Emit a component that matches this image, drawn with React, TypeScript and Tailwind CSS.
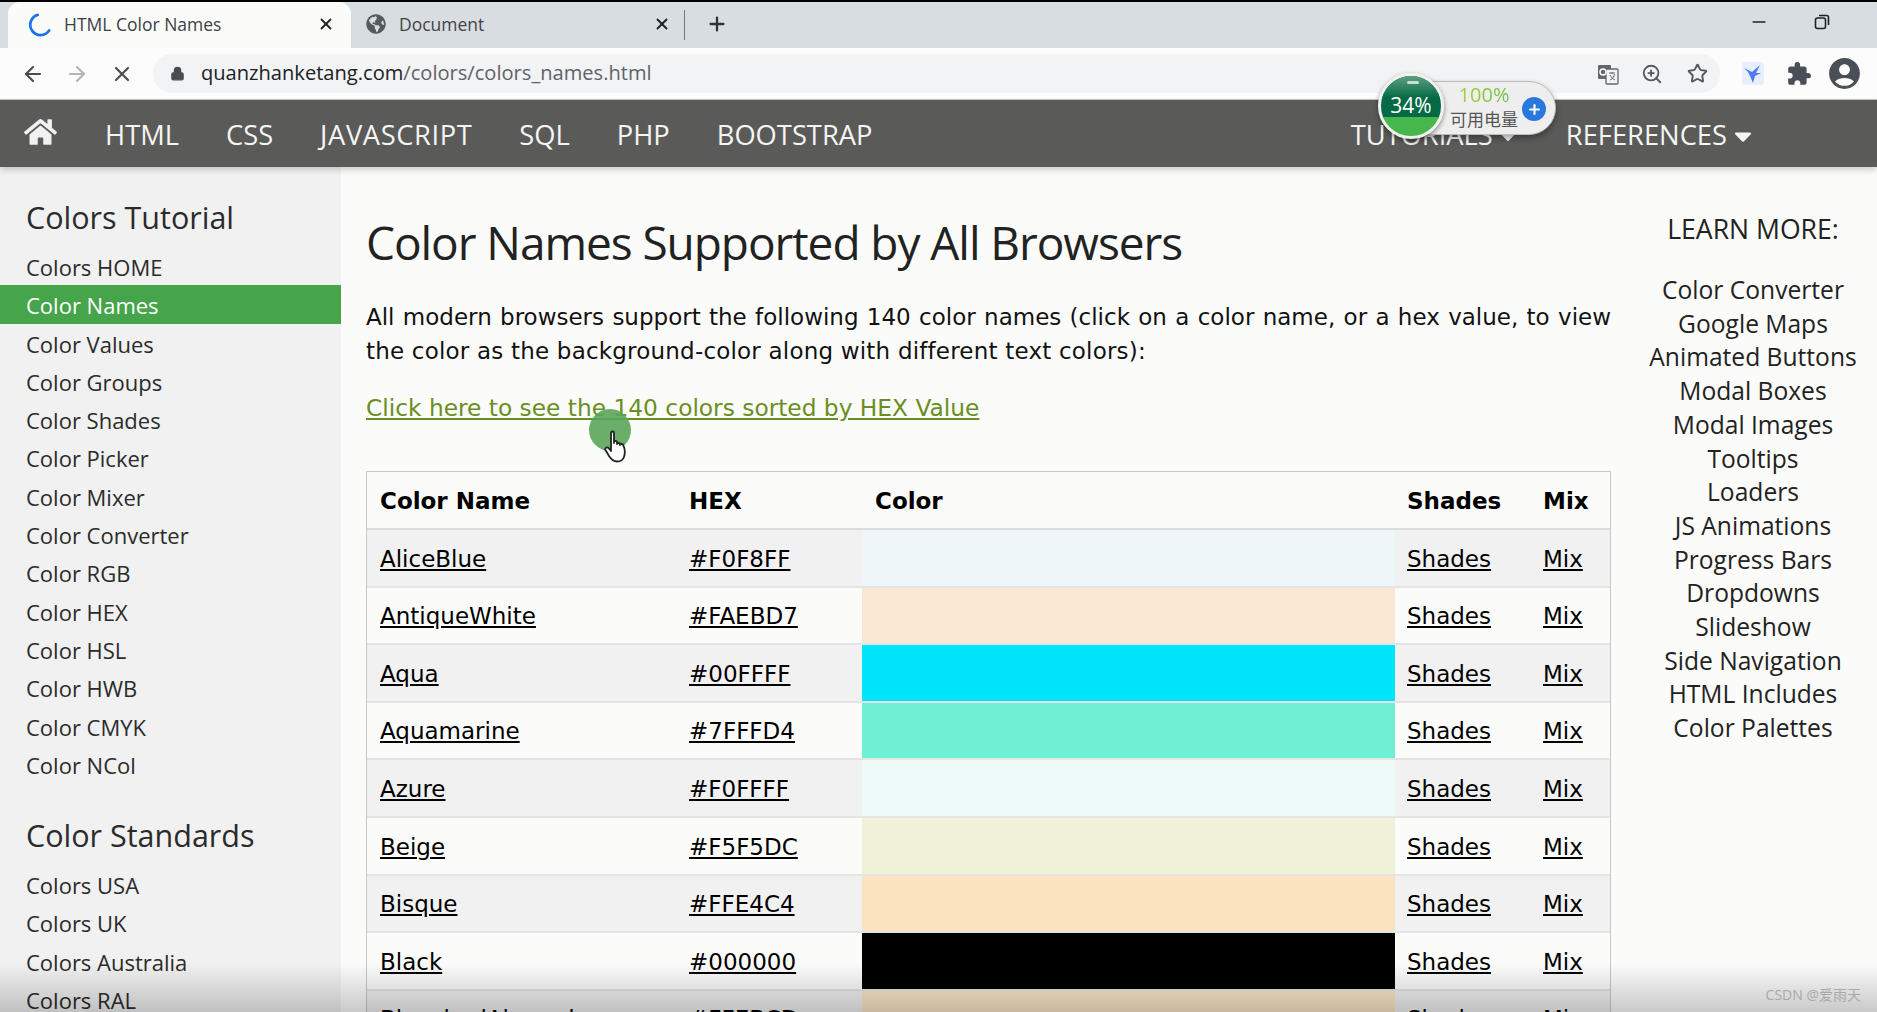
import React from 'react';
import { ArrowLeft, ArrowRight, X, Plus, Lock, ZoomIn, Star, Minus } from 'lucide-react';
import { FaHome, FaGlobeAmericas, FaCaretDown } from 'react-icons/fa';
import { MdAccountCircle, MdExtension } from 'react-icons/md';

const tutorialLinks = ['Colors HOME', 'Color Names', 'Color Values', 'Color Groups', 'Color Shades', 'Color Picker', 'Color Mixer', 'Color Converter', 'Color RGB', 'Color HEX', 'Color HSL', 'Color HWB', 'Color CMYK', 'Color NCol'];
const standardLinks = ['Colors USA', 'Colors UK', 'Colors Australia', 'Colors RAL'];
const navLinks = ['HTML', 'CSS', 'JAVASCRIPT', 'SQL', 'PHP', 'BOOTSTRAP'];
const learnMore = ['Color Converter', 'Google Maps', 'Animated Buttons', 'Modal Boxes', 'Modal Images', 'Tooltips', 'Loaders', 'JS Animations', 'Progress Bars', 'Dropdowns', 'Slideshow', 'Side Navigation', 'HTML Includes', 'Color Palettes'];

const rows = [
  { name: 'AliceBlue', hex: '#F0F8FF', color: 'bg-[#eff6f9]' },
  { name: 'AntiqueWhite', hex: '#FAEBD7', color: 'bg-[#fae8d2]' },
  { name: 'Aqua', hex: '#00FFFF', color: 'bg-[#00e4fc]' },
  { name: 'Aquamarine', hex: '#7FFFD4', color: 'bg-[#6ff0d4]' },
  { name: 'Azure', hex: '#F0FFFF', color: 'bg-[#eefaf8]' },
  { name: 'Beige', hex: '#F5F5DC', color: 'bg-[#eff2d8]' },
  { name: 'Bisque', hex: '#FFE4C4', color: 'bg-[#fce3c0]' },
  { name: 'Black', hex: '#000000', color: 'bg-black' },
  { name: 'BlanchedAlmond', hex: '#FFEBCD', color: 'bg-[#fbe7c8]' },
];

const Chrome: React.FC = () => (
  <header className="font-['Open_Sans',sans-serif]">
    {/* Tab strip */}
    <div className="h-[48px] bg-[#d7dde0] border-t-2 border-black flex items-end text-[#3c4043] text-[17.5px]">
      <div className="ml-[8px] w-[343px] h-[46px] bg-[#fbfcfa] rounded-t-[12px] flex items-center pl-[20px] pr-[16px] pb-[2px]">
        <svg viewBox="0 0 24 24" className="w-[26px] h-[26px] fill-none stroke-[#1a73e8] stroke-[2.5]" aria-hidden="true">
          <path d="M9 3.6 A9.5 9.5 0 1 0 19.5 18" strokeLinecap="round" />
        </svg>
        <span className="ml-[10px]">HTML Color Names</span>
        <X className="ml-auto w-[18px] h-[18px] text-[#222]" strokeWidth={2.5} />
      </div>
      <div className="w-[333px] h-[46px] flex items-center pl-[15px] pr-[13px] pb-[2px] text-[#444]">
        <FaGlobeAmericas className="w-[20px] h-[20px] text-[#55595e]" />
        <span className="ml-[13px]">Document</span>
        <X className="ml-auto w-[18px] h-[18px] text-[#222]" strokeWidth={2.5} />
      </div>
      <div className="w-px h-[30px] mb-[8px] bg-[#777]" />
      <Plus className="ml-[21px] mb-[13px] w-[22px] h-[22px] text-[#333]" strokeWidth={2.5} />
      <div className="ml-auto flex items-center mb-[16px]">
        <Minus className="w-[20px] h-[20px] text-[#222] mr-[45px]" strokeWidth={2} />
        <svg viewBox="0 0 16 16" className="w-[16px] h-[16px] fill-none stroke-[#222] stroke-[1.6] mr-[47px]" aria-hidden="true">
          <rect x="1.5" y="4" width="10" height="10.5" rx="2" />
          <path d="M5 1.5h7.5a2 2 0 0 1 2 2V11" />
        </svg>
      </div>
    </div>

    {/* Toolbar */}
    <div className="h-[52px] bg-[#fbfcfb] flex items-center border-b border-[#c4c6c4]">
      <ArrowLeft className="ml-[21px] w-[24px] h-[24px] text-[#4a4d50]" strokeWidth={2.2} />
      <ArrowRight className="ml-[20px] w-[24px] h-[24px] text-[#b3b5b7]" strokeWidth={2.2} />
      <X className="ml-[21px] w-[24px] h-[24px] text-[#4a4d50]" strokeWidth={2.2} />
      <div className="ml-[19px] w-[1567px] h-[39px] bg-[#f1f3f4] rounded-full flex items-center pl-[17px]">
        <Lock className="w-[15px] h-[15px] text-[#4a4d50] fill-[#4a4d50]" />
        <span className="ml-[16px] text-[20.1px] text-[#202124]">
          quanzhanketang.com<span className="text-[#5f6368]">/colors/colors_names.html</span>
        </span>
        <div className="ml-auto flex items-center pr-[12px] text-[#55595e]">
          <svg viewBox="0 0 22 22" className="w-[22px] h-[22px]" aria-hidden="true">
            <rect x="1" y="2" width="13" height="14" rx="1" fill="#63676b" />
            <rect x="9" y="6" width="12" height="15" rx="1" fill="#f1f3f4" stroke="#63676b" strokeWidth="1.3" />
            <circle cx="6" cy="9" r="3" fill="none" stroke="#fff" strokeWidth="1.4" />
            <path d="M12 10h6M15 9v2M13 17c3-1 4-4 4.5-6M13 12c1 2 3 4 5 5" stroke="#63676b" strokeWidth="1" fill="none" />
          </svg>
          <ZoomIn className="ml-[22px] w-[22px] h-[22px]" strokeWidth={2} />
          <Star className="ml-[24px] w-[21px] h-[21px]" strokeWidth={2.2} />
        </div>
      </div>
      <div className="ml-[22px] w-[22px] h-[23px] bg-[#e8eefb] rounded-[3px] flex items-center justify-center">
        <svg viewBox="0 0 20 20" className="w-[20px] h-[20px]" aria-hidden="true">
          <path d="M1 4l8 4 8-7-4 8 5 0-6 3-2 7-3-7-2-4z" fill="#4f7cf0" />
        </svg>
      </div>
      <MdExtension className="ml-[22px] w-[26px] h-[26px] text-[#4a4f57]" />
      <MdAccountCircle className="ml-[14px] w-[37px] h-[37px] text-[#4a4f57]" />
    </div>
  </header>
);

const NavBar: React.FC = () => (
  <nav className="h-[67px] bg-[#5a5b58] flex items-center text-[27.3px] text-[#f5f5f5] font-['Open_Sans',sans-serif] shadow-[0_3px_6px_rgba(0,0,0,0.18)] relative pt-[4px]">
    <FaHome className="ml-[24px] mb-[8px] w-[33px] h-[30px] text-[#f1f1f1]" />
    <div className="ml-[48px] flex gap-[47px]">
      {navLinks.map((link) => (
        <span key={link} className={link === 'JAVASCRIPT' ? 'tracking-[0.6px]' : ''}>{link}</span>
      ))}
    </div>
    <div className="ml-auto mr-[120px] flex items-center">
      <span>TUTORIALS</span>
      <FaCaretDown className="ml-[3px] w-[24px] h-[24px]" />
      <span className="ml-[46px]">REFERENCES</span>
      <FaCaretDown className="ml-[2px] w-[28px] h-[28px]" />
    </div>
  </nav>
);

const Sidebar: React.FC = () => (
  <aside className="w-[341px] shrink-0 bg-[#f1f1f1] pt-[30px] text-[#2b2b2b] font-['Open_Sans',sans-serif]">
    <h2 className="pl-[26px] h-[40px] leading-[40px] text-[30.5px]">Colors Tutorial</h2>
    <ul className="mt-[10px] text-[22px]">
      {tutorialLinks.map((link) => (
        <li
          key={link}
          className={`pl-[26px] h-[38.3px] leading-[40px] ${link === 'Color Names' ? 'bg-[#46a54b] text-white' : ''}`}
        >
          {link}
        </li>
      ))}
    </ul>
    <h2 className="mt-[32px] pl-[26px] h-[40px] leading-[40px] text-[30.5px]">Color Standards</h2>
    <ul className="mt-[10px] text-[22px]">
      {standardLinks.map((link) => (
        <li key={link} className="pl-[26px] h-[38.3px] leading-[40px]">{link}</li>
      ))}
    </ul>
  </aside>
);

const ColorTable: React.FC = () => (
  <div className="mt-[46px] border border-[#c8c8c8] text-black text-[23px] font-['DejaVu_Sans',sans-serif]">
    <div className="flex h-[58px] pt-[2px] items-center font-bold border-b-2 border-[#dcdcdc] bg-[#fbfcfa]">
      <div className="w-[309px] pl-[13px]">Color Name</div>
      <div className="w-[186px] pl-[13px]">HEX</div>
      <div className="w-[533px] pl-[13px]">Color</div>
      <div className="w-[148px] pl-[12px]">Shades</div>
      <div>Mix</div>
    </div>
    {rows.map((row, i) => (
      <div
        key={row.name}
        className={`flex h-[57.6px] items-stretch border-b-2 border-[#e4e4e4] ${i % 2 === 0 ? 'bg-[#f1f1f1]' : 'bg-[#fbfcfa]'}`}
      >
        <div className="w-[309px] pl-[13px] pt-[2px] flex items-center underline">{row.name}</div>
        <div className="w-[186px] pl-[13px] pt-[2px] flex items-center underline">{row.hex}</div>
        <div className={`w-[533px] ${row.color}`} />
        <div className="w-[148px] pl-[12px] pt-[2px] flex items-center underline">Shades</div>
        <div className="pt-[2px] flex items-center underline">Mix</div>
      </div>
    ))}
  </div>
);

const BatteryWidget: React.FC = () => (
  <div className="absolute left-[1378px] top-[73px] w-[178px] h-[66px] font-['Open_Sans','Noto_Sans_CJK_SC',sans-serif]">
    <div className="absolute left-[33px] top-[8px] w-[145px] h-[54px] rounded-r-full bg-[#eeeeee] border border-[#bbb] shadow-[0_3px_6px_rgba(0,0,0,0.35)]" />
    <div className="absolute left-[70px] top-[11px] w-[72px] text-center text-[20px] leading-[22px] bg-[linear-gradient(100deg,#b5d334,#5fb946)] bg-clip-text text-transparent">100%</div>
    <div className="absolute left-[68px] top-[36px] w-[76px] text-center text-[17px] leading-[20px] text-[#555] font-['Noto_Sans_CJK_SC',sans-serif]">可用电量</div>
    <div className="absolute left-[144px] top-[24px] w-[24px] h-[24px] rounded-full bg-[#2a78dc] flex items-center justify-center">
      <Plus className="w-[15px] h-[15px] text-white" strokeWidth={3.5} />
    </div>
    <div className="absolute left-0 top-0 w-[66px] h-[66px] rounded-full border-[3px] border-[#eef3ee] overflow-hidden bg-[linear-gradient(#036a45_0%,#036a45_68%,#45b74c_68%,#45b74c_100%)] shadow-[0_2px_5px_rgba(0,0,0,0.45)] flex items-center justify-center">
      <div className="absolute top-0 left-0 w-full h-[22px] bg-[linear-gradient(#5d9f80,#036a45)]" />
      <div className="absolute top-[5px] left-[26px] w-[12px] h-[3px] rounded-full bg-white/70" />
      <span className="relative -mt-[1px] text-white text-[21px]">34%</span>
    </div>
  </div>
);

const HandCursor: React.FC = () => (
  <svg viewBox="0 0 24 33" className="absolute left-[604px] top-[430px] w-[24px] h-[33px]" aria-hidden="true">
    <path
      d="M7 3C7 1 10 1 10 3L10 13L10 12C10 10.5 13 10.5 13 12L13 14C13 12.5 16 12.5 16 14L16 15C16 13.5 19 13.5 19 15L20 17C21 20 21 24 20 27C19 30 16 31.5 13 31.5C9 31.5 7 29 5 26L1.5 20C0.5 18 3 16.5 4.5 18L7 21Z"
      fill="#fff"
      stroke="#222"
      strokeWidth="1.8"
      strokeLinejoin="round"
    />
  </svg>
);

export default function App() {
  return (
    <div className="relative w-[1877px] h-[1012px] overflow-hidden bg-[#fbfcfa]">
      <Chrome />
      <NavBar />
      <div className="flex h-[845px]">
        <Sidebar />
        <main className="w-[1270px] shrink-0 pl-[25px] font-['DejaVu_Sans',sans-serif]">
          <h1 className="mt-[43px] h-[64px] leading-[64px] text-[46px] tracking-[-1.06px] text-[#222] font-['Open_Sans',sans-serif]">
            Color Names Supported by All Browsers
          </h1>
          <p className="mt-[26px] text-[23px] leading-[34px] text-[#111] text-justify">
            All modern browsers support the following 140 color names (click on a color name, or a hex value, to view{' '}
            <span className="tracking-[0.2px]">the color as the background-color along with different text colors):</span>
          </p>
          <p className="mt-[23px] text-[23.3px] leading-[34px] text-[#6b8e23] underline">
            Click here to see the 140 colors sorted by HEX Value
          </p>
          <ColorTable />
        </main>
        <aside className="flex-1 pl-[18px] pt-[43px] text-center text-[#222] font-['Open_Sans',sans-serif]">
          <h3 className="text-[26.6px] leading-[38px]">LEARN MORE:</h3>
          <ul className="mt-[25px] text-[24.6px] leading-[33.7px]">
            {learnMore.map((link) => (
              <li key={link}>{link}</li>
            ))}
          </ul>
        </aside>
      </div>

      <BatteryWidget />

      {/* Cursor with click highlight */}
      <div className="absolute left-[589px] top-[409px] w-[42px] h-[42px] rounded-full bg-[#5aa55a]/90" />
      <HandCursor />

      {/* Video fade along the bottom edge */}
      <div className="absolute left-0 right-0 bottom-0 h-[50px] bg-[linear-gradient(rgba(0,0,0,0),rgba(0,0,0,0.2))] pointer-events-none" />
      <span className="absolute right-[16px] bottom-[7px] text-[14px] text-[#a8a8a8] font-['Open_Sans','Noto_Sans_CJK_SC',sans-serif]">CSDN @爱雨天</span>
    </div>
  );
}
